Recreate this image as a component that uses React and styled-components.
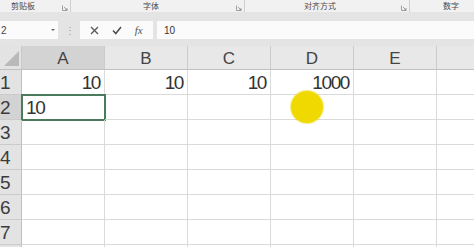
import React from "react";
import styled, { createGlobalStyle } from "styled-components";

const GlobalStyle = createGlobalStyle`
    html, body {
        margin: 0;
        padding: 0;
        background: #ffffff;
    }
    body {
        font-family: "Liberation Sans", Arial, sans-serif;
    }
`;

const Page = styled.div`
    position: relative;
    width: 474px;
    height: 247px;
    overflow: hidden;
    background: #ffffff;
`;

const RibbonLabels = styled.div`
    display: flex;
    height: 12px;
    background: #f1f1f1;
`;

const Group = styled.div`
    display: flex;
    align-items: center;
    flex: ${(p) => (p.w ? `0 0 ${p.w}px` : "1")};
    box-sizing: border-box;
    border-right: ${(p) => (p.last ? "none" : "1px solid #cfcfcf")};
    height: 12px;
`;

const GroupLabel = styled.span`
    margin-left: ${(p) => p.pad}px;
    font-family: "Noto Sans CJK SC", sans-serif;
    font-size: 8px;
    line-height: 12px;
    color: #4a4a4a;
`;

const Launcher = styled.svg`
    margin-left: auto;
    margin-right: 2px;
    margin-top: 3px;
`;

const ToolArea = styled.div`
    background: #e4e4e4;
    padding: 9px 0 7px 0;
`;

const FormulaRow = styled.div`
    display: flex;
    height: 18px;
`;

const NameBox = styled.div`
    display: flex;
    align-items: center;
    flex: 0 0 58px;
    background: #fbfbfb;
    font-size: 10px;
    color: #444;
    padding: 0 3px 0 1px;
    box-sizing: border-box;
`;

const DropArrow = styled.span`
    margin-left: auto;
    width: 0;
    height: 0;
    border-left: 2px solid transparent;
    border-right: 2px solid transparent;
    border-top: 2px solid #666;
`;

const Grip = styled.div`
    flex: 0 0 21px;
    display: flex;
    align-items: center;
    justify-content: center;
    padding-left: 1px;
    color: #9a9a9a;
    font-size: 10px;
`;

const ButtonBox = styled.div`
    flex: 0 0 73px;
    display: flex;
    align-items: center;
    justify-content: space-around;
    padding: 0 4px 0 4px;
    box-sizing: border-box;
    background: #fbfbfb;
`;

const Fx = styled.span`
    font-family: "Liberation Serif", serif;
    font-style: italic;
    font-size: 11px;
    color: #555;
`;

const FormulaInput = styled.div`
    flex: 1;
    margin-left: 4px;
    background: #fbfbfb;
    display: flex;
    align-items: center;
    padding-left: 7px;
    font-size: 10px;
    color: #333;
`;

const Grid = styled.div`
    display: grid;
    grid-template-columns: 22px repeat(6, 83px);
    grid-template-rows: 24px repeat(8, 25px);
`;

const Corner = styled.div`
    background: #e3e3e3;
    border-right: 1px solid #c9c9c9;
    border-bottom: 1px solid #c0c0c0;
    display: flex;
    align-items: flex-end;
    justify-content: flex-end;
    padding: 0 2px 3px 0;
`;

const ColHead = styled.div`
    box-sizing: border-box;
    background: ${(p) => (p.active ? "#d3d3d3" : "#e8e8e8")};
    border-right: 1px solid #cbcbcb;
    border-bottom: 1px solid #c0c0c0;
    display: flex;
    align-items: center;
    justify-content: center;
    padding-top: 2px;
    font-size: 17px;
    color: #444;
`;

const RowHead = styled.div`
    box-sizing: border-box;
    background: ${(p) => (p.active ? "#d3d3d3" : "#e3e3e3")};
    border-right: 1px solid #c0c0c0;
    border-bottom: 1px solid #cbcbcb;
    display: flex;
    align-items: flex-end;
    padding-bottom: 2px;
    overflow: hidden;
    font-size: 19px;
    line-height: 19px;
    color: #3c3c3c;
`;

const Cell = styled.div`
    box-sizing: border-box;
    border-right: 1px solid #dadada;
    border-bottom: 1px solid #dadada;
    display: flex;
    align-items: flex-end;
    justify-content: ${(p) => (p.left ? "flex-start" : "flex-end")};
    padding: 0 4px 2px 4px;
    font-size: 19px;
    line-height: 19px;
    letter-spacing: -1.4px;
    color: #333;
    outline: ${(p) => (p.selected ? "2px solid #4b7a5c" : "none")};
    outline-offset: -1px;
`;

const CursorDot = styled.div`
    position: absolute;
    left: 291px;
    top: 91px;
    width: 32px;
    height: 32px;
    border-radius: 50%;
    background: #f0d900;
    box-shadow: 0 0 1px 1px rgba(240, 217, 0, 0.5);
`;

const groups = [
    { label: "剪贴板", w: 71, pad: 11, launcher: true },
    { label: "字体", w: 174, pad: 72, launcher: true },
    { label: "对齐方式", w: 165, pad: 59, launcher: true },
    { label: "数字", pad: 33, last: true },
];

// the sixth column and the eighth row are only slivers at the edges, their labels are out of view
const columns = ["A", "B", "C", "D", "E", ""];
const rows = [1, 2, 3, 4, 5, 6, 7, 8];
const VISIBLE_ROWS = 7;

const data = {
    1: { A: "10", B: "10", C: "10", D: "1000" },
    2: { A: "10" },
};

function LauncherIcon() {
    return (
        <Launcher width="6" height="6" viewBox="0 0 6 6">
            <path d="M0.5 0.5 V5.5 H5.5" fill="none" stroke="#8a8a8a" strokeWidth="0.8" />
            <path d="M2 2 L5 5 M5 3 V5 H3" fill="none" stroke="#8a8a8a" strokeWidth="0.8" />
        </Launcher>
    );
}

export default function App() {
    return (
        <Page>
            <GlobalStyle />
            <RibbonLabels>
                {groups.map((g) => (
                    <Group key={g.label} w={g.w} last={g.last}>
                        <GroupLabel pad={g.pad}>{g.label}</GroupLabel>
                        {g.launcher && <LauncherIcon />}
                    </Group>
                ))}
            </RibbonLabels>
            <ToolArea>
                <FormulaRow>
                    <NameBox>
                        <span>2</span>
                        <DropArrow />
                    </NameBox>
                    <Grip>⋮</Grip>
                    <ButtonBox>
                        <svg width="9" height="9" viewBox="0 0 9 9">
                            <path d="M1 1 L8 8 M8 1 L1 8" stroke="#5a5a5a" strokeWidth="1.4" />
                        </svg>
                        <svg width="10" height="9" viewBox="0 0 10 9">
                            <path d="M1 4.5 L3.8 7.5 L9 1" fill="none" stroke="#4a4a4a" strokeWidth="1.5" />
                        </svg>
                        <Fx>fx</Fx>
                    </ButtonBox>
                    <FormulaInput>10</FormulaInput>
                </FormulaRow>
            </ToolArea>
            <Grid>
                <Corner>
                    <svg width="15" height="15" viewBox="0 0 15 15">
                        <path d="M15 0 V15 H0 Z" fill="#b9b9b9" />
                    </svg>
                </Corner>
                {columns.map((c, i) => (
                    <ColHead key={i} active={c === "A"}>{c}</ColHead>
                ))}
                {rows.map((r) => (
                    <React.Fragment key={r}>
                        <RowHead active={r === 2}>{r <= VISIBLE_ROWS ? r : ""}</RowHead>
                        {columns.map((c, i) => (
                            <Cell key={i} selected={r === 2 && c === "A"} left={r === 2}>
                                {data[r] && data[r][c]}
                            </Cell>
                        ))}
                    </React.Fragment>
                ))}
            </Grid>
            <CursorDot />
        </Page>
    );
}
